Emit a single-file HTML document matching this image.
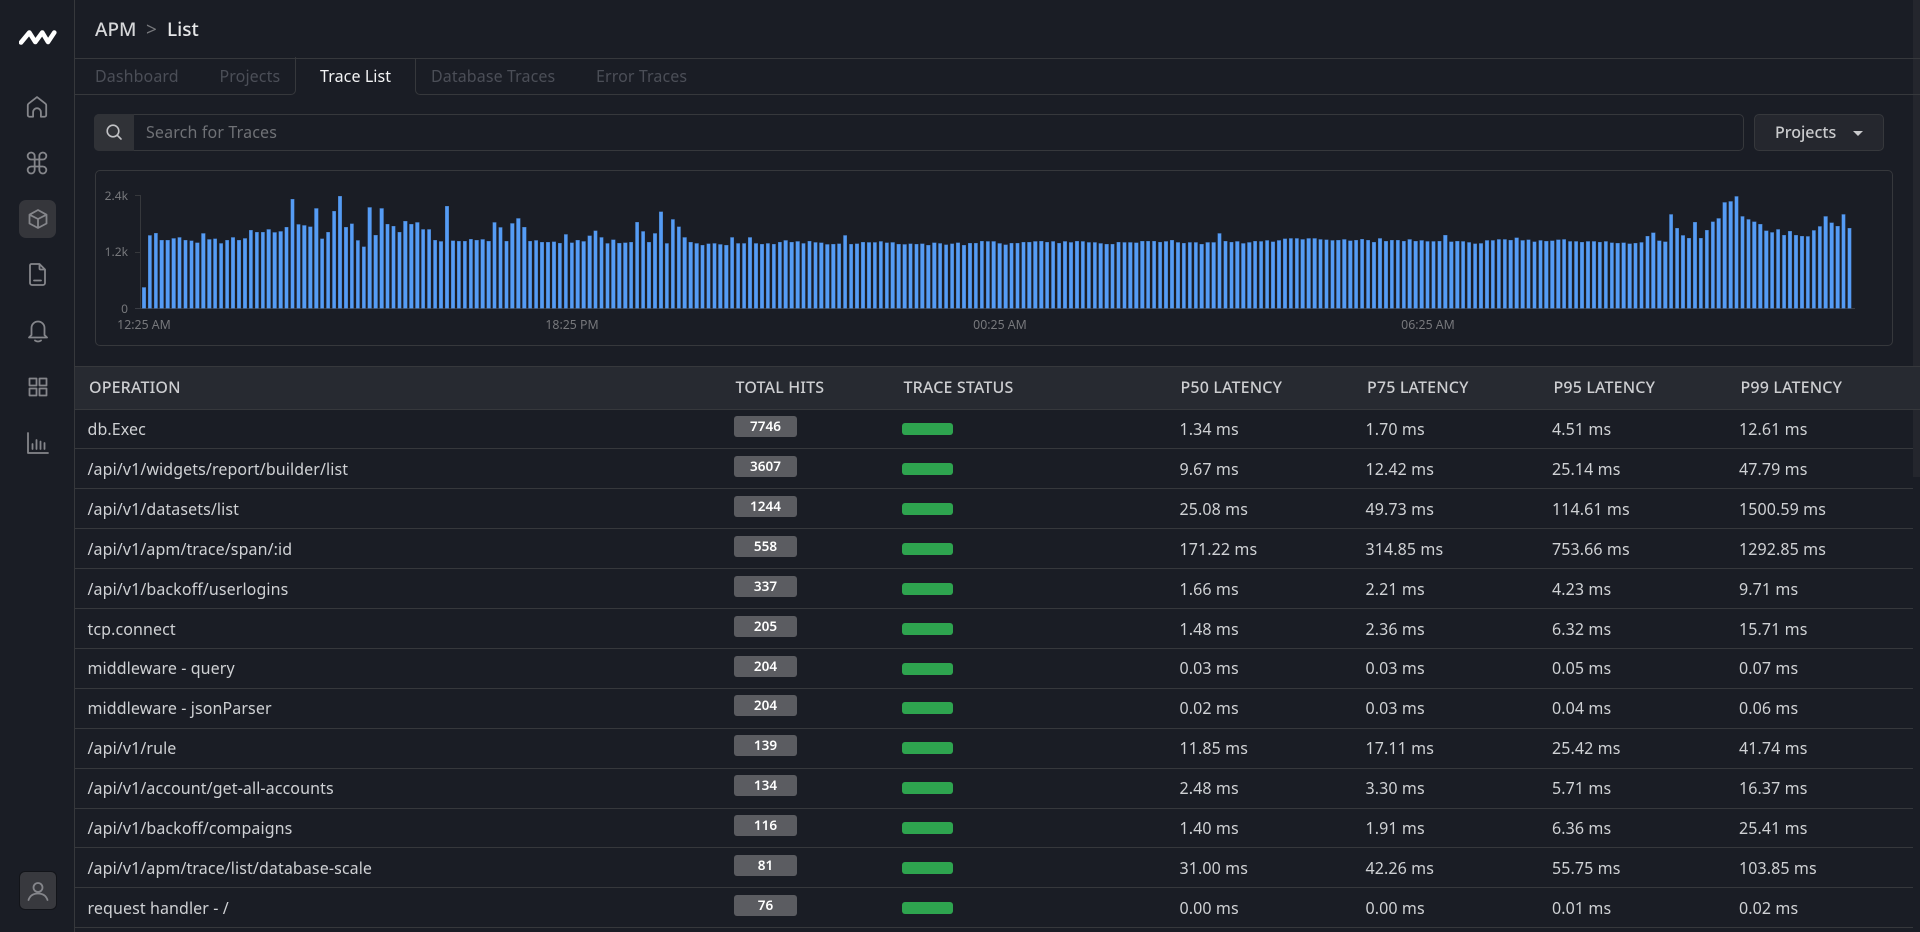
<!DOCTYPE html>
<html><head><meta charset="utf-8"><title>APM List</title>
<style>
html,body{margin:0;padding:0;width:1920px;height:932px;overflow:hidden;background:#1a1d25}
body{position:relative;font-family:"Noto Sans","Noto Sans CJK JP","Liberation Sans",sans-serif;color:#cfd1d4;font-size:16px;letter-spacing:.1px}
.a{position:absolute;white-space:nowrap}
svg{position:absolute;fill:none;stroke:#85868b;stroke-width:1.8;stroke-linecap:round;stroke-linejoin:round}
.tab{top:64px;line-height:24px;color:#4b4e57;font-size:16px}
#bars{position:absolute;left:142px;top:160px;height:445px;width:5130px;display:flex;justify-content:space-between;transform:scale(.33333);transform-origin:0 0}
#bars i{display:block;width:11.500px;box-sizing:border-box;background:#559cf5;border:1px solid #3c659c;border-bottom:0}
.yl{color:#77787c;font-size:12px;line-height:16px;text-align:right;width:40px;left:88px;letter-spacing:0}
.xl{color:#77787c;font-size:12.300px;line-height:16px;top:317px;width:100px;text-align:center;letter-spacing:0}
.h{top:366px;line-height:42px;font-weight:500;font-size:16px;color:#cdced1;letter-spacing:.15px}
.r{position:absolute;left:75px;width:1838px;height:39.9px;box-sizing:border-box;border-bottom:1px solid #36383c;line-height:40px}
.r span{position:absolute;top:-0.55px;white-space:nowrap;color:#cfd1d4}
.r b{position:absolute;left:659px;top:6.600px;width:63px;height:21px;border-radius:3px;background:#5b5c61;color:#fff;font-size:13.500px;font-weight:600;line-height:20px;text-align:center;letter-spacing:0}
.r u{position:absolute;left:827px;top:13.600px;width:51px;height:12px;border-radius:3px;background:#2ea44f}
.o{left:12.500px}.p1{left:1104.500px}.p2{left:1290.500px}.p3{left:1477px}.p4{left:1664px}
</style></head><body>
<div class="a" style="left:1913px;top:0;width:7px;height:477px;background:#24262d"></div>
<div class="a" style="left:74px;top:0;width:1px;height:932px;background:#36383c"></div>

<svg style="left:19px;top:26px" width="38" height="20" viewBox="19 26 38 20"><path d="M21 42.500L29.300 32.500L35.300 42L42.300 32.500L48 42L54.300 32.500" style="stroke:#fff;stroke-width:4.600"/></svg>
<svg style="left:24px;top:94px;stroke-width:1.650" width="26" height="26" viewBox="0 0 24 24"><path d="M3.500 19.500V10.400a2 2 0 0 1 .8-1.600L12 2.800l7.700 6a2 2 0 0 1 .8 1.600v9.100a1.500 1.500 0 0 1-1.500 1.500h-3.400v-4.300a3.600 3.600 0 0 0-7.200 0V21H5a1.500 1.500 0 0 1-1.500-1.500z"/></svg>
<svg style="left:23px;top:148.500px;stroke-width:1.550" width="28" height="28" viewBox="0 0 24 24"><path d="M7 9a3 3 0 1 1 3-3v12a3 3 0 1 1-3-3h10a3 3 0 1 1-3 3V6a3 3 0 1 1 3 3H7"/></svg>
<div class="a" style="left:19px;top:200px;width:37px;height:38px;border-radius:7px;background:#35363b"></div>
<svg style="left:25.500px;top:207px" width="24" height="24" viewBox="0 0 24 24"><path d="M12 3l8.500 4.700v8.800L12 21l-8.500-4.500V7.700L12 3zM12 12l8.500-4.300M12 12v9M12 12L3.500 7.700"/></svg>
<svg style="left:25px;top:262px" width="24" height="24" viewBox="0 0 24 24"><path d="M14.500 2v4.500a1 1 0 0 0 1 1H20M18 23H7a2 2 0 0 1-2-2V3.500a1.500 1.500 0 0 1 1.500-1.500H14.500L20 7.500V21a2 2 0 0 1-2 2zM9 18.500h7"/></svg>
<svg style="left:25.500px;top:318.500px" width="24" height="24" viewBox="0 0 24 24"><path d="M5.500 16v-7a6.500 6.500 0 0 1 13 0V16l2.500 2.500H3l2.500-2.500zM9 21.500q3 2 6 0"/></svg>
<svg style="left:25.500px;top:375px" width="24" height="24" viewBox="0 0 24 24"><path d="M3.500 3.500h7v7h-7zM13.500 3.500h7v7h-7zM3.500 13.500h7v7h-7zM13.500 13.500h7v7h-7z"/></svg>
<svg style="left:25px;top:431px" width="24" height="24" viewBox="0 0 24 24"><path d="M3 2v20h20M7.500 18v-5M11.500 18V9M15.500 18v-7.500M19.500 18v-6"/></svg>
<div class="a" style="left:20px;top:872px;width:36px;height:37px;border-radius:5px;background:#38393e;box-shadow:0 0 0 1px #121419"></div>
<svg style="left:26px;top:878.500px" width="24" height="24" viewBox="0 0 24 24"><circle cx="12" cy="8.500" r="4.500"/><path d="M2.500 21c1.500-4.500 5-6.500 9.500-6.500s8 2 9.500 6.500"/></svg>

<div class="a" style="left:95px;top:15px;font-size:19px;font-weight:500;line-height:28px;color:#d6d7d9;letter-spacing:0">APM</div>
<div class="a" style="left:146px;top:15px;font-size:19px;line-height:28px;color:#77787c;letter-spacing:0">&gt;</div>
<div class="a" style="left:167px;top:15px;font-size:19px;font-weight:500;line-height:28px;color:#e6e7e8;letter-spacing:0">List</div>

<div class="a" style="left:75px;top:58px;width:1845px;height:1px;background:#36383c"></div>
<div class="a" style="left:75px;top:57px;width:221px;height:38px;box-sizing:border-box;border-right:1px solid #36383c;border-bottom:1px solid #36383c;border-bottom-right-radius:5px"></div>
<div class="a" style="left:415px;top:58px;width:1505px;height:37px;box-sizing:border-box;border-left:1px solid #36383c;border-bottom:1px solid #36383c;border-bottom-left-radius:5px"></div>
<div class="a tab" style="left:95px">Dashboard</div>
<div class="a tab" style="left:219.500px">Projects</div>
<div class="a tab" style="left:320px;color:#f2f3f4">Trace List</div>
<div class="a tab" style="left:431px">Database Traces</div>
<div class="a tab" style="left:596px">Error Traces</div>

<div class="a" style="left:94px;top:114px;width:1650px;height:37px;box-sizing:border-box;border:1px solid #36383c;border-radius:5px"></div>
<div class="a" style="left:94px;top:114px;width:40px;height:37px;background:#303237;border-radius:5px 0 0 5px"></div>
<svg style="left:105px;top:123px" width="18" height="18" viewBox="0 0 18 18"><circle cx="8" cy="8" r="5.800" style="stroke:#c2c3c6;stroke-width:1.600"/><path d="M12.300 12.300L16 16" style="stroke:#c2c3c6;stroke-width:1.600"/></svg>
<div class="a" style="left:146px;top:120px;line-height:24px;color:#6f7176;font-size:16px;letter-spacing:.15px">Search for Traces</div>
<div class="a" style="left:1754px;top:114px;width:130px;height:37px;box-sizing:border-box;border:1px solid #36383c;border-radius:5px;background:#25272e"></div>
<div class="a" style="left:1775px;top:120px;line-height:24px;color:#c9cacc;font-size:16px;font-weight:500;letter-spacing:0">Projects</div>
<div class="a" style="left:1853px;top:131px;width:0;height:0;border-left:5px solid transparent;border-right:5px solid transparent;border-top:5px solid #c9cacc"></div>

<div class="a" style="left:95px;top:170px;width:1798px;height:176px;box-sizing:border-box;border:1px solid #36383c;border-radius:5px"></div>
<div class="a" style="left:140px;top:195px;width:1px;height:114px;background:#36383c"></div>
<div class="a" style="left:135px;top:195px;width:5px;height:1px;background:#36383c"></div>
<div class="a" style="left:135px;top:252px;width:5px;height:1px;background:#36383c"></div>
<div class="a" style="left:135px;top:308px;width:1720px;height:1px;background:#3a3d45"></div>
<div class="a yl" style="top:188px">2.4k</div>
<div class="a yl" style="top:244px">1.2k</div>
<div class="a yl" style="top:301px">0</div>
<div class="a xl" style="left:94px">12:25 AM</div>
<div class="a xl" style="left:522px">18:25 PM</div>
<div class="a xl" style="left:950px">00:25 AM</div>
<div class="a xl" style="left:1378px">06:25 AM</div>

<div id="bars"><i style="margin-top:382px"></i><i style="margin-top:226px"></i><i style="margin-top:219px"></i><i style="margin-top:240px"></i><i style="margin-top:240px"></i><i style="margin-top:235px"></i><i style="margin-top:232px"></i><i style="margin-top:240px"></i><i style="margin-top:242px"></i><i style="margin-top:248px"></i><i style="margin-top:220px"></i><i style="margin-top:238px"></i><i style="margin-top:236px"></i><i style="margin-top:250px"></i><i style="margin-top:240px"></i><i style="margin-top:232px"></i><i style="margin-top:240px"></i><i style="margin-top:235px"></i><i style="margin-top:210px"></i><i style="margin-top:216px"></i><i style="margin-top:216px"></i><i style="margin-top:208px"></i><i style="margin-top:217px"></i><i style="margin-top:214px"></i><i style="margin-top:201px"></i><i style="margin-top:117px"></i><i style="margin-top:193px"></i><i style="margin-top:196px"></i><i style="margin-top:200px"></i><i style="margin-top:145px"></i><i style="margin-top:236px"></i><i style="margin-top:216px"></i><i style="margin-top:153px"></i><i style="margin-top:108px"></i><i style="margin-top:201px"></i><i style="margin-top:191px"></i><i style="margin-top:241px"></i><i style="margin-top:260px"></i><i style="margin-top:142px"></i><i style="margin-top:225px"></i><i style="margin-top:145px"></i><i style="margin-top:192px"></i><i style="margin-top:198px"></i><i style="margin-top:216px"></i><i style="margin-top:183px"></i><i style="margin-top:192px"></i><i style="margin-top:187px"></i><i style="margin-top:208px"></i><i style="margin-top:208px"></i><i style="margin-top:240px"></i><i style="margin-top:244px"></i><i style="margin-top:138px"></i><i style="margin-top:242px"></i><i style="margin-top:243px"></i><i style="margin-top:243px"></i><i style="margin-top:237px"></i><i style="margin-top:240px"></i><i style="margin-top:238px"></i><i style="margin-top:243px"></i><i style="margin-top:187px"></i><i style="margin-top:202px"></i><i style="margin-top:243px"></i><i style="margin-top:190px"></i><i style="margin-top:175px"></i><i style="margin-top:201px"></i><i style="margin-top:243px"></i><i style="margin-top:241px"></i><i style="margin-top:246px"></i><i style="margin-top:246px"></i><i style="margin-top:245px"></i><i style="margin-top:249px"></i><i style="margin-top:223px"></i><i style="margin-top:248px"></i><i style="margin-top:240px"></i><i style="margin-top:244px"></i><i style="margin-top:227px"></i><i style="margin-top:212px"></i><i style="margin-top:232px"></i><i style="margin-top:250px"></i><i style="margin-top:239px"></i><i style="margin-top:249px"></i><i style="margin-top:248px"></i><i style="margin-top:246px"></i><i style="margin-top:186px"></i><i style="margin-top:214px"></i><i style="margin-top:246px"></i><i style="margin-top:220px"></i><i style="margin-top:155px"></i><i style="margin-top:250px"></i><i style="margin-top:178px"></i><i style="margin-top:200px"></i><i style="margin-top:232px"></i><i style="margin-top:246px"></i><i style="margin-top:250px"></i><i style="margin-top:255px"></i><i style="margin-top:251px"></i><i style="margin-top:250px"></i><i style="margin-top:253px"></i><i style="margin-top:255px"></i><i style="margin-top:232px"></i><i style="margin-top:250px"></i><i style="margin-top:250px"></i><i style="margin-top:232px"></i><i style="margin-top:250px"></i><i style="margin-top:252px"></i><i style="margin-top:250px"></i><i style="margin-top:252px"></i><i style="margin-top:246px"></i><i style="margin-top:241px"></i><i style="margin-top:246px"></i><i style="margin-top:244px"></i><i style="margin-top:250px"></i><i style="margin-top:243px"></i><i style="margin-top:247px"></i><i style="margin-top:248px"></i><i style="margin-top:253px"></i><i style="margin-top:252px"></i><i style="margin-top:251px"></i><i style="margin-top:226px"></i><i style="margin-top:252px"></i><i style="margin-top:251px"></i><i style="margin-top:246px"></i><i style="margin-top:247px"></i><i style="margin-top:247px"></i><i style="margin-top:244px"></i><i style="margin-top:248px"></i><i style="margin-top:247px"></i><i style="margin-top:252px"></i><i style="margin-top:253px"></i><i style="margin-top:251px"></i><i style="margin-top:252px"></i><i style="margin-top:251px"></i><i style="margin-top:255px"></i><i style="margin-top:248px"></i><i style="margin-top:250px"></i><i style="margin-top:254px"></i><i style="margin-top:251px"></i><i style="margin-top:248px"></i><i style="margin-top:255px"></i><i style="margin-top:249px"></i><i style="margin-top:249px"></i><i style="margin-top:243px"></i><i style="margin-top:244px"></i><i style="margin-top:244px"></i><i style="margin-top:250px"></i><i style="margin-top:254px"></i><i style="margin-top:249px"></i><i style="margin-top:249px"></i><i style="margin-top:246px"></i><i style="margin-top:246px"></i><i style="margin-top:244px"></i><i style="margin-top:243px"></i><i style="margin-top:246px"></i><i style="margin-top:244px"></i><i style="margin-top:249px"></i><i style="margin-top:244px"></i><i style="margin-top:247px"></i><i style="margin-top:243px"></i><i style="margin-top:244px"></i><i style="margin-top:247px"></i><i style="margin-top:247px"></i><i style="margin-top:250px"></i><i style="margin-top:252px"></i><i style="margin-top:252px"></i><i style="margin-top:246px"></i><i style="margin-top:247px"></i><i style="margin-top:247px"></i><i style="margin-top:248px"></i><i style="margin-top:243px"></i><i style="margin-top:243px"></i><i style="margin-top:243px"></i><i style="margin-top:246px"></i><i style="margin-top:244px"></i><i style="margin-top:240px"></i><i style="margin-top:247px"></i><i style="margin-top:249px"></i><i style="margin-top:247px"></i><i style="margin-top:247px"></i><i style="margin-top:252px"></i><i style="margin-top:247px"></i><i style="margin-top:247px"></i><i style="margin-top:220px"></i><i style="margin-top:243px"></i><i style="margin-top:246px"></i><i style="margin-top:244px"></i><i style="margin-top:250px"></i><i style="margin-top:247px"></i><i style="margin-top:243px"></i><i style="margin-top:244px"></i><i style="margin-top:241px"></i><i style="margin-top:245px"></i><i style="margin-top:241px"></i><i style="margin-top:236px"></i><i style="margin-top:235px"></i><i style="margin-top:235px"></i><i style="margin-top:238px"></i><i style="margin-top:235px"></i><i style="margin-top:235px"></i><i style="margin-top:238px"></i><i style="margin-top:239px"></i><i style="margin-top:241px"></i><i style="margin-top:240px"></i><i style="margin-top:238px"></i><i style="margin-top:242px"></i><i style="margin-top:240px"></i><i style="margin-top:237px"></i><i style="margin-top:240px"></i><i style="margin-top:246px"></i><i style="margin-top:235px"></i><i style="margin-top:243px"></i><i style="margin-top:240px"></i><i style="margin-top:240px"></i><i style="margin-top:243px"></i><i style="margin-top:238px"></i><i style="margin-top:243px"></i><i style="margin-top:241px"></i><i style="margin-top:244px"></i><i style="margin-top:244px"></i><i style="margin-top:243px"></i><i style="margin-top:225px"></i><i style="margin-top:245px"></i><i style="margin-top:243px"></i><i style="margin-top:244px"></i><i style="margin-top:247px"></i><i style="margin-top:251px"></i><i style="margin-top:250px"></i><i style="margin-top:241px"></i><i style="margin-top:241px"></i><i style="margin-top:238px"></i><i style="margin-top:238px"></i><i style="margin-top:240px"></i><i style="margin-top:233px"></i><i style="margin-top:241px"></i><i style="margin-top:239px"></i><i style="margin-top:245px"></i><i style="margin-top:241px"></i><i style="margin-top:243px"></i><i style="margin-top:242px"></i><i style="margin-top:239px"></i><i style="margin-top:238px"></i><i style="margin-top:244px"></i><i style="margin-top:244px"></i><i style="margin-top:246px"></i><i style="margin-top:244px"></i><i style="margin-top:244px"></i><i style="margin-top:246px"></i><i style="margin-top:244px"></i><i style="margin-top:248px"></i><i style="margin-top:249px"></i><i style="margin-top:248px"></i><i style="margin-top:251px"></i><i style="margin-top:249px"></i><i style="margin-top:247px"></i><i style="margin-top:228px"></i><i style="margin-top:218px"></i><i style="margin-top:242px"></i><i style="margin-top:245px"></i><i style="margin-top:163px"></i><i style="margin-top:204px"></i><i style="margin-top:226px"></i><i style="margin-top:234px"></i><i style="margin-top:186px"></i><i style="margin-top:234px"></i><i style="margin-top:210px"></i><i style="margin-top:185px"></i><i style="margin-top:175px"></i><i style="margin-top:127px"></i><i style="margin-top:124px"></i><i style="margin-top:109px"></i><i style="margin-top:169px"></i><i style="margin-top:178px"></i><i style="margin-top:185px"></i><i style="margin-top:192px"></i><i style="margin-top:212px"></i><i style="margin-top:217px"></i><i style="margin-top:208px"></i><i style="margin-top:225px"></i><i style="margin-top:213px"></i><i style="margin-top:225px"></i><i style="margin-top:228px"></i><i style="margin-top:229px"></i><i style="margin-top:211px"></i><i style="margin-top:199px"></i><i style="margin-top:169px"></i><i style="margin-top:188px"></i><i style="margin-top:198px"></i><i style="margin-top:163px"></i><i style="margin-top:204px"></i></div>

<div class="a" style="left:75px;top:366px;width:1845px;height:44px;box-sizing:border-box;background:#272a31;border-top:1px solid #36383c;border-bottom:1px solid #36383c"></div>
<div class="a h" style="left:89px">OPERATION</div>
<div class="a h" style="left:735.500px">TOTAL HITS</div>
<div class="a h" style="left:903.500px">TRACE STATUS</div>
<div class="a h" style="left:1180.500px">P50 LATENCY</div>
<div class="a h" style="left:1367px">P75 LATENCY</div>
<div class="a h" style="left:1553.500px">P95 LATENCY</div>
<div class="a h" style="left:1740.500px">P99 LATENCY</div>

<div class="r" style="top:409.600px"><span class="o">db.Exec</span><b>7746</b><u></u><span class="p1">1.34 ms</span><span class="p2">1.70 ms</span><span class="p3">4.51 ms</span><span class="p4">12.61 ms</span></div>
<div class="r" style="top:449.500px"><span class="o">/api/v1/widgets/report/builder/list</span><b>3607</b><u></u><span class="p1">9.67 ms</span><span class="p2">12.42 ms</span><span class="p3">25.14 ms</span><span class="p4">47.79 ms</span></div>
<div class="r" style="top:489.400px"><span class="o">/api/v1/datasets/list</span><b>1244</b><u></u><span class="p1">25.08 ms</span><span class="p2">49.73 ms</span><span class="p3">114.61 ms</span><span class="p4">1500.59 ms</span></div>
<div class="r" style="top:529.300px"><span class="o">/api/v1/apm/trace/span/:id</span><b>558</b><u></u><span class="p1">171.22 ms</span><span class="p2">314.85 ms</span><span class="p3">753.66 ms</span><span class="p4">1292.85 ms</span></div>
<div class="r" style="top:569.200px"><span class="o">/api/v1/backoff/userlogins</span><b>337</b><u></u><span class="p1">1.66 ms</span><span class="p2">2.21 ms</span><span class="p3">4.23 ms</span><span class="p4">9.71 ms</span></div>
<div class="r" style="top:609.100px"><span class="o">tcp.connect</span><b>205</b><u></u><span class="p1">1.48 ms</span><span class="p2">2.36 ms</span><span class="p3">6.32 ms</span><span class="p4">15.71 ms</span></div>
<div class="r" style="top:649px"><span class="o">middleware - query</span><b>204</b><u></u><span class="p1">0.03 ms</span><span class="p2">0.03 ms</span><span class="p3">0.05 ms</span><span class="p4">0.07 ms</span></div>
<div class="r" style="top:688.900px"><span class="o">middleware - jsonParser</span><b>204</b><u></u><span class="p1">0.02 ms</span><span class="p2">0.03 ms</span><span class="p3">0.04 ms</span><span class="p4">0.06 ms</span></div>
<div class="r" style="top:728.800px"><span class="o">/api/v1/rule</span><b>139</b><u></u><span class="p1">11.85 ms</span><span class="p2">17.11 ms</span><span class="p3">25.42 ms</span><span class="p4">41.74 ms</span></div>
<div class="r" style="top:768.700px"><span class="o">/api/v1/account/get-all-accounts</span><b>134</b><u></u><span class="p1">2.48 ms</span><span class="p2">3.30 ms</span><span class="p3">5.71 ms</span><span class="p4">16.37 ms</span></div>
<div class="r" style="top:808.600px"><span class="o">/api/v1/backoff/compaigns</span><b>116</b><u></u><span class="p1">1.40 ms</span><span class="p2">1.91 ms</span><span class="p3">6.36 ms</span><span class="p4">25.41 ms</span></div>
<div class="r" style="top:848.500px"><span class="o">/api/v1/apm/trace/list/database-scale</span><b>81</b><u></u><span class="p1">31.00 ms</span><span class="p2">42.26 ms</span><span class="p3">55.75 ms</span><span class="p4">103.85 ms</span></div>
<div class="r" style="top:888.400px"><span class="o">request handler - /</span><b>76</b><u></u><span class="p1">0.00 ms</span><span class="p2">0.00 ms</span><span class="p3">0.01 ms</span><span class="p4">0.02 ms</span></div>
</body></html>
